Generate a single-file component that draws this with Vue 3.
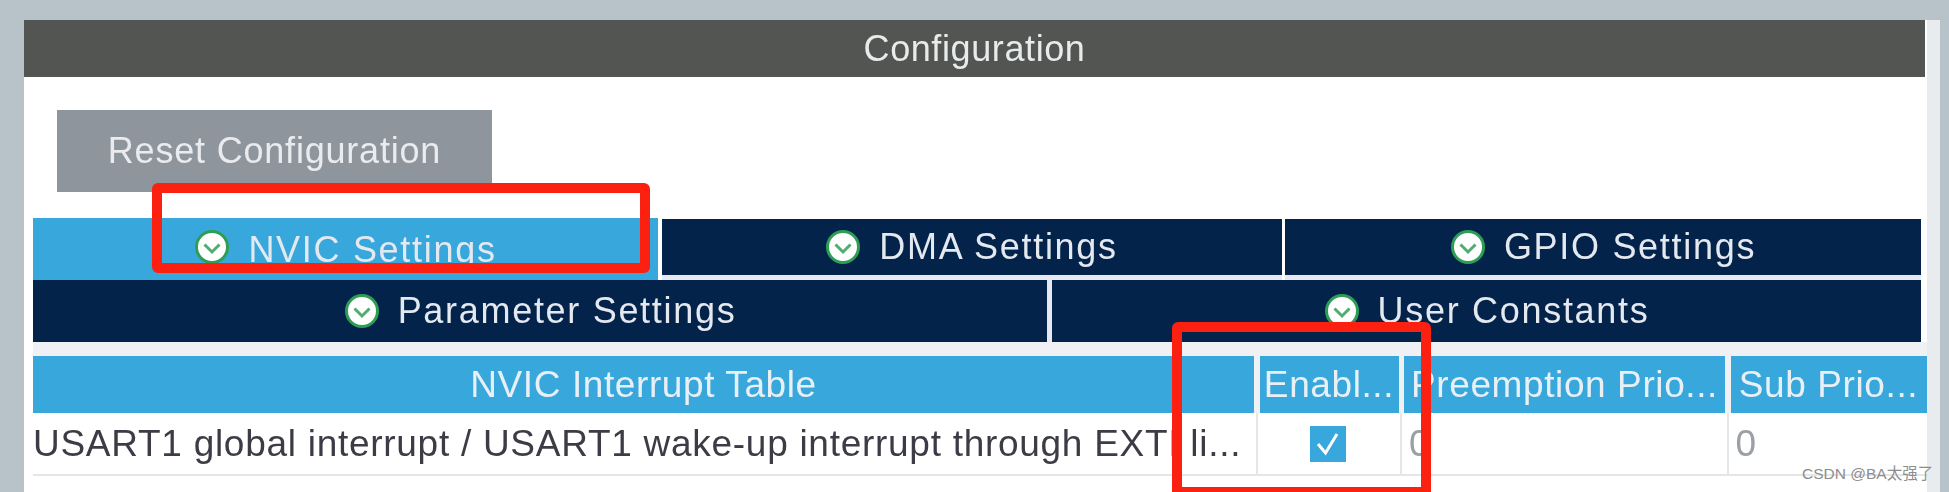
<script setup>
const rowOne = [
  { label: 'NVIC Settings', active: true },
  { label: 'DMA Settings' },
  { label: 'GPIO Settings' },
]
const rowTwo = [{ label: 'Parameter Settings' }, { label: 'User Constants' }]
</script>

<template>
  <div class="page">
    <div class="shell">
      <main class="panel">
        <header class="title">Configuration</header>
        <button class="reset" type="button">Reset Configuration</button>

        <div class="tabs">
          <div class="tab-row row-one">
            <div v-for="t in rowOne" :key="t.label" class="tab" :class="{ active: t.active }">
              <svg class="ok" viewBox="0 0 36 36">
                <circle cx="18" cy="18" r="15.5" fill="#fff" stroke="#2f9e55" stroke-width="3" />
                <path d="M10.5 15.5 L18 23 L25.5 15.5" fill="none" stroke="#4fae6f" stroke-width="3" />
              </svg>
              <span>{{ t.label }}</span>
            </div>
          </div>
          <div class="tab-row row-two">
            <div v-for="t in rowTwo" :key="t.label" class="tab">
              <svg class="ok" viewBox="0 0 36 36">
                <circle cx="18" cy="18" r="15.5" fill="#fff" stroke="#2f9e55" stroke-width="3" />
                <path d="M10.5 15.5 L18 23 L25.5 15.5" fill="none" stroke="#4fae6f" stroke-width="3" />
              </svg>
              <span>{{ t.label }}</span>
            </div>
          </div>
        </div>

        <div class="table-wrap">
          <div class="thead">
            <div class="th">NVIC Interrupt Table</div>
            <div class="th">Enabl...</div>
            <div class="th">Preemption Prio...</div>
            <div class="th">Sub Prio...</div>
          </div>
          <div class="tbody">
            <div class="td name">USART1 global interrupt / USART1 wake-up interrupt through EXTI li...</div>
            <div class="td check">
              <svg class="box" viewBox="0 0 36 36">
                <rect width="36" height="36" fill="#38a7dc" />
                <path d="M8 18 L15.5 27 L27 8" fill="none" stroke="#fff" stroke-width="3" />
              </svg>
            </div>
            <div class="td num">0</div>
            <div class="td num">0</div>
          </div>
        </div>
      </main>
      <div class="strip"></div>
    </div>

    <div class="mark mark-tab"></div>
    <div class="mark mark-col"></div>
    <div class="watermark">CSDN @BA太强了</div>
  </div>
</template>

<style>
html,
body {
  margin: 0;
  background: #b8c3c9;
}
</style>

<style scoped>
.page {
  position: relative;
  width: 1949px;
  height: 492px;
  overflow: hidden;
  background: #b8c3c9;
  font-family: "Liberation Sans", Arial, sans-serif;
}
.shell {
  display: flex;
  width: 1916px;
  height: 472px;
  margin-left: 24px;
  padding-top: 20px;
  filter: blur(0.6px);
}
.panel {
  width: 1903px;
  background: #fff;
}
.strip {
  width: 13px;
  background: #e8ecee;
}
.title {
  width: 1901px;
  height: 57px;
  line-height: 57px;
  text-align: center;
  background: #535553;
  color: #e8ebec;
  font-size: 36px;
  letter-spacing: 0.6px;
}
.reset {
  display: block;
  width: 435px;
  height: 82px;
  margin: 33px 0 0 33px;
  padding: 0;
  border: 0;
  background: #8f959c;
  color: #e9ebee;
  font-family: inherit;
  font-size: 36px;
  letter-spacing: 0.8px;
}
.tabs {
  margin: 26px 0 0 9px;
  width: 1888px;
}
.tab-row {
  display: grid;
  background: #e6eaf0;
}
.row-one {
  grid-template-columns: 625px 620px 636px;
  column-gap: 3.5px;
  height: 62px;
  background: #fff;
}
.row-two {
  grid-template-columns: 1014px 869px;
  column-gap: 5px;
  height: 62px;
  background: #e6eaf0;
}
.tab {
  display: flex;
  align-items: center;
  justify-content: center;
  gap: 18px;
  background: #03234b;
  color: #e4e9f0;
  font-size: 36px;
  letter-spacing: 1.7px;
}
.row-one .tab {
  height: 56px;
  margin-top: 1px;
  border-bottom: 5px solid #e6eaf0;
}
.row-one .tab.active {
  height: 62px;
  margin-top: 0;
  border-bottom: 0;
  padding-bottom: 0;
  background: #38a7dc;
  align-items: flex-start;
  padding-top: 11px;
  box-sizing: border-box;
}
.ok {
  width: 36px;
  height: 36px;
  flex: none;
}
.table-wrap {
  margin-left: 9px;
  padding-top: 14px;
  background: #f0f1f4;
}
.thead,
.tbody {
  display: grid;
  grid-template-columns: 1221px 139px 321px 196px;
  column-gap: 5.5px;
}
.thead {
  height: 57px;
  background: #f0f1f4;
}
.th {
  display: flex;
  align-items: center;
  justify-content: center;
  overflow: hidden;
  white-space: nowrap;
  background: #38a7dc;
  color: #e8f0f6;
  font-size: 37px;
  letter-spacing: 0.6px;
}
.tbody {
  height: 61px;
  background: #fff;
  border-bottom: 2px solid #e4e6e9;
}
.td {
  display: flex;
  align-items: center;
  white-space: nowrap;
  font-size: 37px;
}
.name {
  color: #3c3c46;
  letter-spacing: 0.72px;
}
.check {
  justify-content: center;
  border-left: 2px solid #e4e6e9;
  margin-left: -4px;
}
.box {
  width: 36px;
  height: 36px;
}
.num {
  color: #9aa0a6;
  border-left: 2px solid #e4e6e9;
  margin-left: -4px;
  padding-left: 7px;
}
.mark {
  position: absolute;
  border: 10px solid #fb2010;
  border-radius: 6px;
  box-sizing: border-box;
}
.mark-tab {
  left: 152px;
  top: 183px;
  width: 498px;
  height: 90px;
}
.mark-col {
  left: 1172px;
  top: 322px;
  width: 259px;
  height: 170px;
  border-bottom-width: 5px;
  border-radius: 6px 6px 0 0;
}
.watermark {
  position: absolute;
  left: 1802px;
  top: 465px;
  font-size: 15.5px;
  line-height: 18px;
  color: #8d8d8d;
  font-family: "Liberation Sans", "Noto Sans CJK SC", sans-serif;
  white-space: nowrap;
}
</style>
